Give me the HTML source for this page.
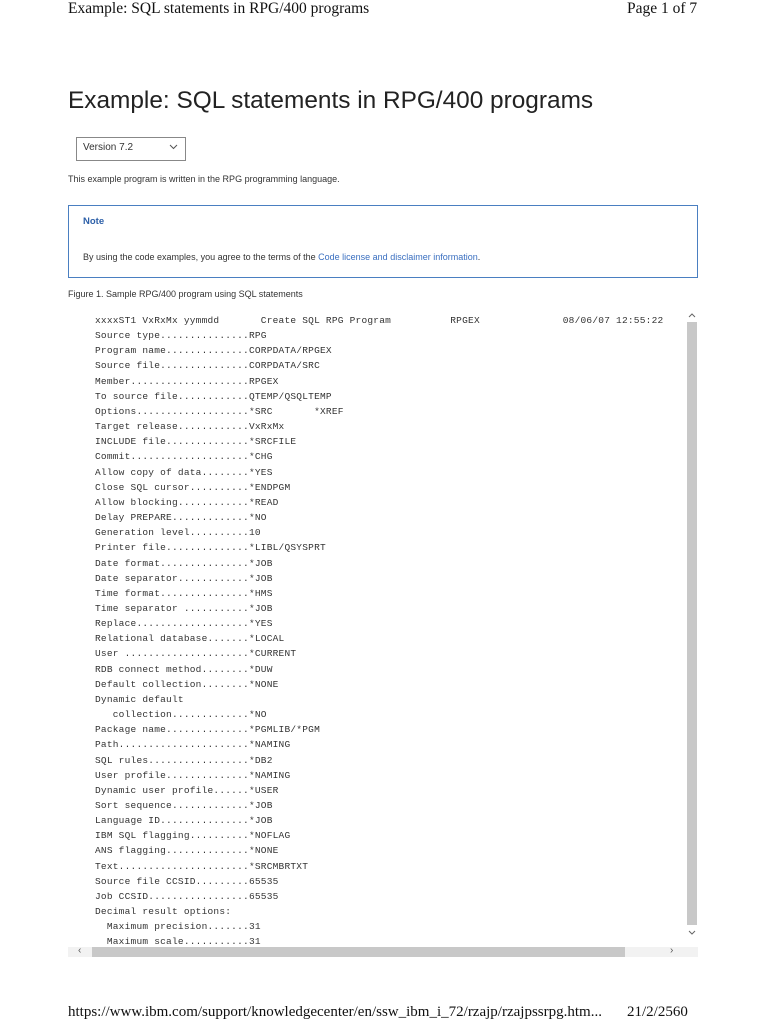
<!DOCTYPE html>
<html><head><meta charset="utf-8"><style>
*{margin:0;padding:0}
body{width:768px;height:1024px;background:#fff;position:relative;overflow:hidden;font-family:"Liberation Sans",sans-serif;color:#222}
.a{position:absolute;white-space:nowrap}
.serif{font-family:"Liberation Serif",serif;font-size:15.5px;color:#111}
pre{position:absolute;left:95px;top:313px;font-family:"Liberation Mono",monospace;font-size:9.5px;letter-spacing:0.22px;line-height:15.15px;color:#333;margin:0}
</style></head><body>
<div class="a serif" style="left:68px;top:0px">Example: SQL statements in RPG/400 programs</div>
<div class="a serif" style="left:627px;top:0px">Page 1 of 7</div>
<div class="a" style="left:68px;top:87px;font-size:24.4px;color:#222">Example: SQL statements in RPG/400 programs</div>
<div class="a" style="left:76px;top:137px;width:108px;height:22px;border:1px solid #888"></div>
<div class="a" style="left:83px;top:142px;font-size:10px;color:#333">Version 7.2</div>
<svg class="a" style="left:169px;top:144px" width="9" height="6"><path d="M1 1L4.5 4.5L8 1" stroke="#555" fill="none"/></svg>
<div class="a" style="left:68px;top:174px;font-size:9px;color:#333">This example program is written in the RPG programming language.</div>
<div class="a" style="left:68px;top:205px;width:628px;height:71px;border:1px solid #4a7fc1"></div>
<div class="a" style="left:83px;top:216px;font-size:9.5px;color:#2c5fa8;font-weight:bold">Note</div>
<div class="a" style="left:83px;top:252px;font-size:9px;color:#333">By using the code examples, you agree to the terms of the <span style="color:#3a6fc0">Code license and disclaimer information</span>.</div>
<div class="a" style="left:68px;top:289px;font-size:9px;color:#333">Figure 1. Sample RPG/400 program using SQL statements</div>
<div class="a" style="left:687px;top:322px;width:10px;height:603px;background:#c8c8c8"></div>
<svg class="a" style="left:688px;top:312px" width="8" height="6"><path d="M1 5L4 2L7 5" stroke="#666" fill="none"/></svg>
<svg class="a" style="left:688px;top:930px" width="8" height="6"><path d="M1 1L4 4L7 1" stroke="#666" fill="none"/></svg>
<div class="a" style="left:68px;top:947px;width:630px;height:10px;background:#f2f2f2"></div>
<div class="a" style="left:92px;top:947px;width:533px;height:10px;background:#c8c8c8"></div>
<div class="a" style="left:78px;top:945px;font-size:10px;color:#555">&lsaquo;</div>
<div class="a" style="left:670px;top:945px;font-size:10px;color:#555">&rsaquo;</div>
<pre>xxxxST1 VxRxMx yymmdd       Create SQL RPG Program          RPGEX              08/06/07 12:55:22
Source type...............RPG
Program name..............CORPDATA/RPGEX
Source file...............CORPDATA/SRC
Member....................RPGEX
To source file............QTEMP/QSQLTEMP
Options...................*SRC       *XREF
Target release............VxRxMx
INCLUDE file..............*SRCFILE
Commit....................*CHG
Allow copy of data........*YES
Close SQL cursor..........*ENDPGM
Allow blocking............*READ
Delay PREPARE.............*NO
Generation level..........10
Printer file..............*LIBL/QSYSPRT
Date format...............*JOB
Date separator............*JOB
Time format...............*HMS
Time separator ...........*JOB
Replace...................*YES
Relational database.......*LOCAL
User .....................*CURRENT
RDB connect method........*DUW
Default collection........*NONE
Dynamic default
   collection.............*NO
Package name..............*PGMLIB/*PGM
Path......................*NAMING
SQL rules.................*DB2
User profile..............*NAMING
Dynamic user profile......*USER
Sort sequence.............*JOB
Language ID...............*JOB
IBM SQL flagging..........*NOFLAG
ANS flagging..............*NONE
Text......................*SRCMBRTXT
Source file CCSID.........65535
Job CCSID.................65535
Decimal result options:
  Maximum precision.......31
  Maximum scale...........31</pre>
<div class="a serif" style="left:68px;top:1004px;font-size:15px">https://www.ibm.com/support/knowledgecenter/en/ssw_ibm_i_72/rzajp/rzajpssrpg.htm...</div>
<div class="a serif" style="left:627px;top:1004px;font-size:15px">21/2/2560</div>
</body></html>
